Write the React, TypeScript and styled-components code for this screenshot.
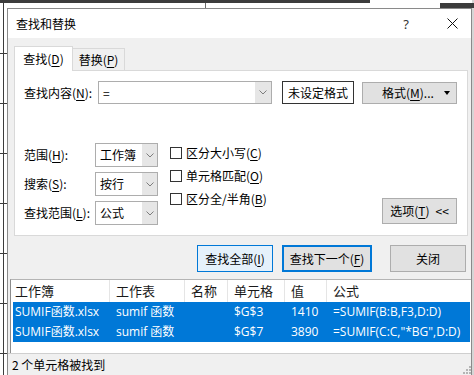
import React from "react";
import styled, { createGlobalStyle } from "styled-components";

const Global = createGlobalStyle`
  html, body { margin: 0; padding: 0; background: #fff; }
  body {
    font-family: "Noto Sans CJK SC", "Noto Sans", sans-serif;
    font-size: 12px;
    color: #000;
  }
  * { box-sizing: border-box; }
  u { text-decoration-thickness: 1px; text-underline-offset: 2px; }
`;

const Screen = styled.div`
  width: 474px;
  height: 375px;
  overflow: hidden;
  padding: 8px 2px 0 7px;
  display: flex;
  background:
    linear-gradient(#3c3c3c, #3c3c3c) 0 0 / 370px 3px no-repeat,
    linear-gradient(#3c3c3c, #3c3c3c) 440px 3px / 34px 5px no-repeat,
    linear-gradient(#6a6a6a, #6a6a6a) 205px 0 / 1px 8px no-repeat,
    linear-gradient(#3c3c3c, #3c3c3c) 3px 0 / 1px 100% no-repeat,
    linear-gradient(#d6d6d6, #d6d6d6) 472px 0 / 2px 100% no-repeat,
    repeating-linear-gradient(to bottom, transparent 0 49px, #3c3c3c 49px 50px) 0 4px / 7px 100% no-repeat,
    #fff;
`;

const Dialog = styled.div`
  flex: 1;
  display: flex;
  flex-direction: column;
  background: #f0f0f0;
  border: 1px solid #8a8a8a;
  border-bottom: none;
`;

const TitleBar = styled.div`
  height: 29px;
  flex-shrink: 0;
  background: #fff;
  display: flex;
  align-items: center;
  padding-left: 8px;
`;

const Title = styled.span`
  font-size: 12px;
  line-height: 16px;
`;

const HelpBox = styled.span`
  margin-left: auto;
  width: 46px;
  text-align: center;
  font-family: "Noto Sans", sans-serif;
  font-size: 13px;
  color: #333;
  line-height: 16px;
`;

const CloseBox = styled.span`
  width: 42px;
  display: flex;
  justify-content: center;
  padding-left: 4px;
`;

const Body = styled.div`
  padding: 8px 3px 0 6px;
  display: flex;
  flex-direction: column;
  flex-shrink: 0;
`;

const Tabs = styled.div`
  display: flex;
  align-items: flex-end;
  height: 24px;
`;

const Tab = styled.div<{ $active?: boolean; $w: number }>`
  width: ${(p) => p.$w}px;
  height: ${(p) => (p.$active ? 25 : 22)}px;
  margin-bottom: ${(p) => (p.$active ? -1 : 0)}px;
  align-self: ${(p) => (p.$active ? "flex-start" : "flex-end")};
  background: ${(p) => (p.$active ? "#fff" : "#f0f0f0")};
  border: 1px solid #d9d9d9;
  border-bottom: none;
  ${(p) => (p.$active ? "" : "border-left: none;")}
  position: relative;
  z-index: ${(p) => (p.$active ? 1 : 0)};
  display: flex;
  align-items: center;
  justify-content: center;
  line-height: 16px;
`;

const Panel = styled.div`
  height: 166px;
  background: #fff;
  border: 1px solid #d9d9d9;
  padding: 10px 10px 10px 9px;
  display: flex;
  flex-direction: column;
`;

const FindRow = styled.div`
  display: flex;
  align-items: center;
  height: 23px;
`;

const Label = styled.span<{ $w?: number }>`
  ${(p) => (p.$w ? `width: ${p.$w}px;` : "")}
  line-height: 16px;
  white-space: nowrap;
`;

const Combo = styled.div<{ $w: number; $h: number }>`
  width: ${(p) => p.$w}px;
  height: ${(p) => p.$h}px;
  border: 1px solid #adadad;
  background: #fff;
  display: flex;
  align-items: stretch;
`;

const ComboText = styled.span`
  flex: 1;
  padding-left: 4px;
  display: flex;
  align-items: center;
  line-height: 16px;
`;

const ArrowBox = styled.span<{ $w: number }>`
  width: ${(p) => p.$w}px;
  background: #e6e6e6;
  display: flex;
  align-items: center;
  justify-content: center;
`;

const FormatPreview = styled.div`
  margin-left: 10px;
  width: 72px;
  height: 23px;
  border: 1px solid #333;
  background: #fff;
  display: flex;
  align-items: center;
  justify-content: center;
  line-height: 16px;
`;

const Button = styled.div<{ $w: number; $h: number; $variant?: "hover" | "default" }>`
  width: ${(p) => p.$w}px;
  height: ${(p) => p.$h}px;
  background: ${(p) => (p.$variant === "hover" ? "#e5f1fb" : "#e1e1e1")};
  border: 1px solid
    ${(p) => (p.$variant === "hover" ? "#0078d7" : p.$variant === "default" ? "#0078d7" : "#adadad")};
  ${(p) => (p.$variant === "default" ? "box-shadow: inset 0 0 0 1px #0078d7;" : "")}
  display: flex;
  align-items: center;
  justify-content: center;
  line-height: 16px;
  white-space: nowrap;
`;

const FormatButton = styled(Button)`
  margin-left: 8px;
  justify-content: flex-start;
  padding: 0 6px 0 19px;
`;

const Caret = styled.span`
  margin-left: auto;
  display: flex;
`;

const OptionsArea = styled.div`
  margin-top: auto;
  display: flex;
  align-items: flex-start;
`;

const FieldGrid = styled.div`
  display: grid;
  grid-template-columns: 71px 63px;
  grid-auto-rows: 24px;
  row-gap: 5px;
  align-items: center;
`;

const CheckList = styled.div`
  margin-left: 12px;
  margin-top: -2px;
  display: grid;
  grid-auto-rows: 23px;
  align-items: center;
`;

const CheckItem = styled.label`
  display: flex;
  align-items: center;
  gap: 4px;
  line-height: 16px;
`;

const Box = styled.span`
  width: 12px;
  height: 12px;
  border: 1px solid #333;
  background: #fff;
`;

const OptionsButton = styled(Button)`
  margin-left: auto;
  align-self: flex-end;
  margin-bottom: 1px;
  gap: 6px;
`;

const ButtonRow = styled.div`
  margin-top: 9px;
  padding-right: 2px;
  display: flex;
  justify-content: flex-end;
`;

const Spacer = styled.span<{ $w: number }>`
  width: ${(p) => p.$w}px;
`;

const Results = styled.div`
  margin: 7px 0 0 2px;
  flex: 1;
  background: #fff;
  border-top: 1px solid #b4b4b4;
  border-left: 1px solid #8c8c8c;
  display: flex;
  flex-direction: column;
`;

const GridRow = styled.div<{ $selected?: boolean; $h: number }>`
  display: grid;
  grid-template-columns: 97px 75px 43px 57px 42px 1fr;
  height: ${(p) => p.$h}px;
  margin: 0 1px 0 2px;
  background: ${(p) => (p.$selected ? "#0078d7" : "transparent")};
  color: ${(p) => (p.$selected ? "#fff" : "#1a1a1a")};
`;

const HeadCell = styled.div`
  display: flex;
  align-items: center;
  padding-left: 6px;
  border-right: 1px solid #e5e5e5;
  font-size: 13px;
  line-height: 16px;
  white-space: nowrap;
  &:first-child { padding-left: 2px; }
  &:last-child { border-right: none; }
`;

const Cell = styled.div`
  display: flex;
  align-items: center;
  padding-left: 6px;
  font-family: "Open Sans", "Noto Sans CJK SC", sans-serif;
  font-size: 12px;
  line-height: 16px;
  white-space: nowrap;
  overflow: hidden;
  &:first-child { padding-left: 2px; }
`;

const StatusBar = styled.div`
  height: 22px;
  flex-shrink: 0;
  border-top: 1px solid #cfcfcf;
  background: #f0f0f0;
  display: flex;
  align-items: center;
  padding-left: 4px;
  line-height: 16px;
`;

const Grip = styled.span`
  margin-left: auto;
  align-self: flex-end;
  display: flex;
  margin-bottom: 1px;
`;

const Chevron = () => (
  <svg width="8" height="5" viewBox="0 0 8 5">
    <polyline points="0.5,0.5 4,4 7.5,0.5" fill="none" stroke="#7d7d7d" strokeWidth="1" />
  </svg>
);

const CloseIcon = () => (
  <svg width="11" height="11" viewBox="0 0 11 11">
    <path d="M0.5 0.5 L10.5 10.5 M10.5 0.5 L0.5 10.5" stroke="#111" strokeWidth="1" />
  </svg>
);

const SmallTriangle = () => (
  <svg width="6" height="4" viewBox="0 0 6 4">
    <polygon points="0,0 6,0 3,4" fill="#000" />
  </svg>
);

const GripIcon = () => (
  <svg width="10" height="10" viewBox="0 0 10 10" fill="#b5b5b5">
    <rect x="8" y="2" width="2" height="2" />
    <rect x="5" y="5" width="2" height="2" />
    <rect x="8" y="5" width="2" height="2" />
    <rect x="2" y="8" width="2" height="2" />
    <rect x="5" y="8" width="2" height="2" />
    <rect x="8" y="8" width="2" height="2" />
  </svg>
);

const SelectBox = ({ value }: { value: string }) => (
  <Combo $w={63} $h={24}>
    <ComboText>{value}</ComboText>
    <ArrowBox $w={15}>
      <Chevron />
    </ArrowBox>
  </Combo>
);

const fields: [string, string, string][] = [
  ["范围(", "H", "工作簿"],
  ["搜索(", "S", "按行"],
  ["查找范围(", "L", "公式"],
];

const checks: [string, string][] = [
  ["区分大小写(", "C"],
  ["单元格匹配(", "O"],
  ["区分全/半角(", "B"],
];

const headers = ["工作簿", "工作表", "名称", "单元格", "值", "公式"];

const rows = [
  ["SUMIF函数.xlsx", "sumif 函数", "", "$G$3", "1410", "=SUMIF(B:B,F3,D:D)"],
  ["SUMIF函数.xlsx", "sumif 函数", "", "$G$7", "3890", '=SUMIF(C:C,"*BG",D:D)'],
];

export default function App() {
  return (
    <>
      <Global />
      <Screen>
        <Dialog>
          <TitleBar>
            <Title>查找和替换</Title>
            <HelpBox>?</HelpBox>
            <CloseBox>
              <CloseIcon />
            </CloseBox>
          </TitleBar>
          <Body>
            <Tabs>
              <Tab $active $w={59}>
                查找(<u>D</u>)
              </Tab>
              <Tab $w={52}>
                替换(<u>P</u>)
              </Tab>
            </Tabs>
            <Panel>
              <FindRow>
                <Label $w={74}>
                  查找内容(<u>N</u>):
                </Label>
                <Combo $w={174} $h={23}>
                  <ComboText>=</ComboText>
                  <ArrowBox $w={16}>
                    <Chevron />
                  </ArrowBox>
                </Combo>
                <FormatPreview>未设定格式</FormatPreview>
                <FormatButton $w={95} $h={22}>
                  格式(<u>M</u>)...
                  <Caret>
                    <SmallTriangle />
                  </Caret>
                </FormatButton>
              </FindRow>
              <OptionsArea>
                <FieldGrid>
                  {fields.map(([pre, key, val]) => (
                    <React.Fragment key={key}>
                      <Label>
                        {pre}
                        <u>{key}</u>):
                      </Label>
                      <SelectBox value={val} />
                    </React.Fragment>
                  ))}
                </FieldGrid>
                <CheckList>
                  {checks.map(([pre, key]) => (
                    <CheckItem key={key}>
                      <Box />
                      <span>
                        {pre}
                        <u>{key}</u>)
                      </span>
                    </CheckItem>
                  ))}
                </CheckList>
                <OptionsButton $w={75} $h={26}>
                  <span>
                    选项(<u>T</u>)
                  </span>
                  <span>&lt;&lt;</span>
                </OptionsButton>
              </OptionsArea>
            </Panel>
            <ButtonRow>
              <Button $w={76} $h={27} $variant="hover">
                查找全部(<u>I</u>)
              </Button>
              <Spacer $w={9} />
              <Button $w={90} $h={27} $variant="default">
                查找下一个(<u>F</u>)
              </Button>
              <Spacer $w={18} />
              <Button $w={76} $h={27}>
                关闭
              </Button>
            </ButtonRow>
          </Body>
          <Results>
            <GridRow $h={22}>
              {headers.map((h) => (
                <HeadCell key={h}>{h}</HeadCell>
              ))}
            </GridRow>
            {rows.map((r, i) => (
              <GridRow key={i} $h={20} $selected>
                {r.map((c, j) => (
                  <Cell key={j}>{c}</Cell>
                ))}
              </GridRow>
            ))}
          </Results>
          <StatusBar>
            2 个单元格被找到
            <Grip>
              <GripIcon />
            </Grip>
          </StatusBar>
        </Dialog>
      </Screen>
    </>
  );
}
